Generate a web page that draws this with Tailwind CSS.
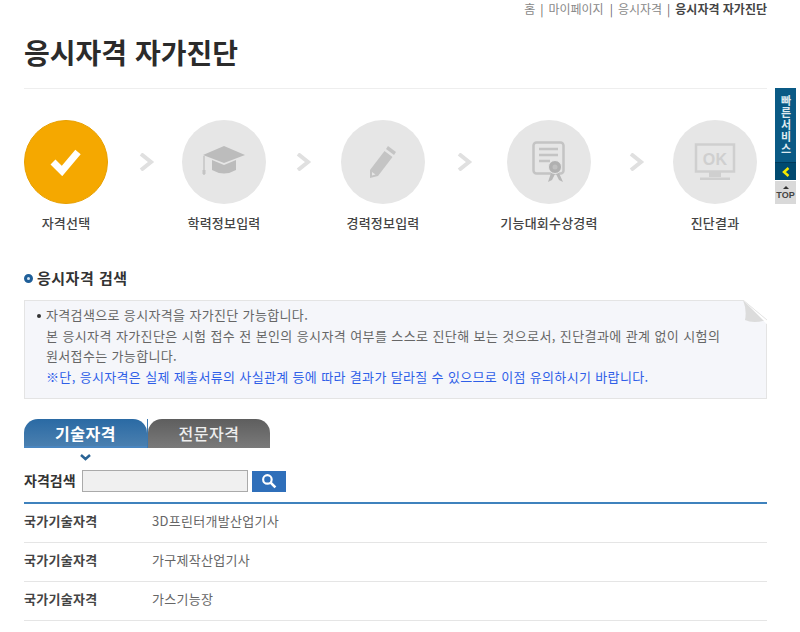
<!DOCTYPE html>
<html lang="ko">
<head>
<meta charset="UTF-8">
<title>응시자격 자가진단</title>
<script src="https://cdn.jsdelivr.net/npm/@tailwindcss/browser@4"></script>
</head>
<body class="bg-white font-['Noto_Sans_CJK_KR','Noto_Sans',sans-serif] text-[#333] overflow-hidden">
<div class="relative w-[800px] h-[632px] overflow-hidden">
  <div class="w-[743px] ml-[24px]">
    <!-- breadcrumb -->
    <div class="flex justify-end items-center h-[17px] text-[12px] leading-[17px] text-[#888] whitespace-nowrap">
      <span>홈</span><span class="mx-[5px] text-[#666]">|</span><span>마이페이지</span><span class="ml-[6px] mr-[5px] text-[#666]">|</span><span>응시자격</span><span class="mx-[5px] text-[#666]">|</span><span class="font-bold text-[#444]">응시자격 자가진단</span>
    </div>
    <!-- title -->
    <div class="h-[72px] border-b border-[#eee] pt-[16px]">
      <h1 class="text-[28px] leading-[38px] font-bold text-[#2b2b2b]">응시자격 자가진단</h1>
    </div>

    <!-- steps -->
    <div class="flex items-start mt-[31px] h-[130px] whitespace-nowrap text-[13px] tracking-[0.2px] font-medium text-[#444]">
      <div class="w-[84px] flex flex-col items-center">
        <div class="w-[84px] h-[84px] rounded-full bg-[#f5a800] border border-[#e8a000] flex items-center justify-center">
          <svg width="32" height="28" viewBox="0 0 32 28"><path d="M3 14 L12 23 L28 4" fill="none" stroke="#fff" stroke-width="7"/></svg>
        </div>
        <span class="mt-[9px] leading-[20px]">자격선택</span>
      </div>
      <div class="w-[74px] h-[84px] pl-[3px] flex items-center justify-center">
        <svg width="16" height="18" viewBox="0 0 16 18"><path d="M2 1 L12 9 L2 17" fill="none" stroke="#e0e0e0" stroke-width="4"/></svg>
      </div>
      <div class="w-[84px] flex flex-col items-center">
        <div class="w-[84px] h-[84px] rounded-full bg-[#e6e6e6] flex items-center justify-center">
          <svg width="44" height="32" viewBox="0 0 44 32"><path d="M22 0 L43 9 L22 17 L1 9 Z" fill="#bcbcbc"/><path d="M10 14 L22 19 L34 14 L34 24 Q22 31 10 24 Z" fill="#bcbcbc"/><path d="M2 10 L2 29" stroke="#c4c4c4" stroke-width="1.500"/><rect x="0.500" y="24" width="3" height="4" fill="#c4c4c4"/></svg>
        </div>
        <span class="mt-[9px] leading-[20px]">학력정보입력</span>
      </div>
      <div class="w-[75px] h-[84px] flex items-center justify-center">
        <svg width="16" height="18" viewBox="0 0 16 18"><path d="M2 1 L12 9 L2 17" fill="none" stroke="#e0e0e0" stroke-width="4"/></svg>
      </div>
      <div class="w-[84px] flex flex-col items-center">
        <div class="w-[84px] h-[84px] rounded-full bg-[#e6e6e6] flex items-center justify-center">
          <svg width="28" height="34" viewBox="0 0 28 34"><path d="M19 1 L27 7 L25 10 L17 4 Z" fill="#c4c4c4"/><path d="M15.500 6 L23.500 12 L9 31 L1 33 L1 25 Z" fill="#c4c4c4"/><path d="M3 27 L3 30.500 L6.500 29.500 Z" fill="#e6e6e6"/></svg>
        </div>
        <span class="mt-[9px] leading-[20px]">경력정보입력</span>
      </div>
      <div class="w-[82px] h-[84px] pr-[3px] flex items-center justify-center">
        <svg width="16" height="18" viewBox="0 0 16 18"><path d="M2 1 L12 9 L2 17" fill="none" stroke="#e0e0e0" stroke-width="4"/></svg>
      </div>
      <div class="w-[84px] flex flex-col items-center">
        <div class="w-[84px] h-[84px] rounded-full bg-[#e6e6e6] flex items-center justify-center">
          <svg width="34" height="42" viewBox="0 0 34 42"><rect x="1.500" y="1.500" width="30" height="31" rx="3" fill="none" stroke="#c4c4c4" stroke-width="2.500"/><path d="M7 8 H26 M7 14 H26 M7 20 H18" stroke="#c4c4c4" stroke-width="2.500"/><path d="M19 32 L16 41 L20 39 L23 33 M27 32 L31 41 L27 39 L24 33" fill="#b8b8b8"/><circle cx="23" cy="26" r="6.500" fill="#b0b0b0" stroke="#e6e6e6" stroke-width="1"/><circle cx="23" cy="26" r="2.500" fill="#c0c0c0"/></svg>
        </div>
        <span class="mt-[9px] leading-[20px]">기능대회수상경력</span>
      </div>
      <div class="w-[82px] h-[84px] pl-[10px] flex items-center justify-center">
        <svg width="16" height="18" viewBox="0 0 16 18"><path d="M2 1 L12 9 L2 17" fill="none" stroke="#e0e0e0" stroke-width="4"/></svg>
      </div>
      <div class="w-[84px] flex flex-col items-center">
        <div class="w-[84px] h-[84px] rounded-full bg-[#e6e6e6] flex items-center justify-center">
          <svg width="42" height="38" viewBox="0 0 42 38"><rect x="2" y="1.500" width="38" height="27" fill="none" stroke="#cfcfcf" stroke-width="2.500"/><text x="21" y="22" text-anchor="middle" font-family="Liberation Sans" font-weight="700" font-size="16" fill="#cfcfcf">OK</text><rect x="15" y="29" width="12" height="5" fill="#cfcfcf"/><rect x="6" y="34.500" width="30" height="2.500" fill="#cfcfcf"/></svg>
        </div>
        <span class="mt-[9px] leading-[20px]">진단결과</span>
      </div>
    </div>

    <!-- section heading -->
    <div class="flex items-center h-[20px] mt-[18px]">
      <span class="w-[9px] h-[9px] rounded-full border-[3px] border-[#1f5f99] bg-[#d5e6f5] mr-[4px]"></span>
      <h2 class="text-[15px] tracking-[0.5px] leading-[20px] font-bold text-[#333]">응시자격 검색</h2>
    </div>

    <!-- notice box -->
    <div class="relative mt-[12px] h-[99px] bg-[#f5f6fa] border border-[#e4e4e4] pl-[21px] pt-[4px] text-[13px] tracking-[0.35px] leading-[20.500px] text-[#666] whitespace-nowrap">
      <span class="absolute left-[12px] top-[13px] w-[4px] h-[4px] rounded-full bg-[#333]"></span>
      <p>자격검색으로 응시자격을 자가진단 가능합니다.</p>
      <p class="tracking-[0.4px]">본 응시자격 자가진단은 시험 접수 전 본인의 응시자격 여부를 스스로 진단해 보는 것으로서, 진단결과에 관계 없이 시험의</p>
      <p>원서접수는 가능합니다.</p>
      <p class="text-[#2f5fe8]">※단, 응시자격은 실제 제출서류의 사실관계 등에 따라 결과가 달라질 수 있으므로 이점 유의하시기 바랍니다.</p>
      <svg class="absolute -right-[1px] -top-[1px]" width="24" height="24" viewBox="0 0 24 24"><path d="M0 0 H24 V24 Z" fill="#fff"/><path d="M0 0 L24 20 Q10 24 2 20 Q4 10 0 0 Z" fill="#dcdcdc"/><path d="M0 0 L24 20 L24 24 Z" fill="#fff"/><path d="M0 0 L24 20" stroke="#e4e4e4"/></svg>
    </div>

    <!-- tabs -->
    <div class="flex mt-[20px] h-[29px] text-[16px] tracking-[0.5px] font-medium">
      <div class="w-[123px] rounded-t-[14px] border-b-2 border-[#4a86c0] bg-[linear-gradient(#2a6aa4,#4a7faf)] text-white text-center leading-[28px] font-bold">기술자격</div>
      <div class="w-[1px] bg-[#3b78b0]"></div>
      <div class="w-[122px] rounded-t-[14px] bg-[linear-gradient(#5e5e5e,#7a7a7a)] text-[#eee] text-center leading-[28px]">전문자격</div>
    </div>
    <div class="h-[13px] pl-[56px] pt-[6px]">
      <svg class="block" width="11" height="7" viewBox="0 0 11 7"><path d="M1 1 L5.500 5 L10 1" fill="none" stroke="#2a6496" stroke-width="2.500"/></svg>
    </div>

    <!-- search -->
    <div class="flex items-center h-[22px] mt-[9px]">
      <span class="text-[14px] leading-[20px] pb-[3px] font-bold text-[#333] w-[58px] whitespace-nowrap">자격검색</span>
      <input type="text" class="w-[166px] h-[22px] bg-[#f0f0f0] border border-[#aaa]">
      <button class="ml-[4px] w-[34px] h-[21px] bg-[#2f6fba] flex items-center justify-center">
        <svg width="16" height="16" viewBox="0 0 15 15"><circle cx="6" cy="6" r="4" fill="none" stroke="#fff" stroke-width="2"/><path d="M9 9 L13.500 13.500" stroke="#fff" stroke-width="2.500"/></svg>
      </button>
    </div>

    <!-- list -->
    <div class="mt-[10px] border-t-2 border-[#3f82bd] text-[13px] tracking-[0.3px]">
      <div class="flex items-center h-[39px] pb-[4px] border-b border-[#e5e5e5]"><span class="w-[128px] font-bold text-[#444]">국가기술자격</span><span class="text-[#666]">3D프린터개발산업기사</span></div>
      <div class="flex items-center h-[39px] pb-[4px] border-b border-[#e5e5e5]"><span class="w-[128px] font-bold text-[#444]">국가기술자격</span><span class="text-[#666]">가구제작산업기사</span></div>
      <div class="flex items-center h-[39px] pb-[4px] border-b border-[#e5e5e5]"><span class="w-[128px] font-bold text-[#444]">국가기술자격</span><span class="text-[#666]">가스기능장</span></div>
    </div>
  </div>

  <!-- quick service side tab -->
  <div class="absolute left-[775px] top-[88px] w-[21px] flex flex-col items-center">
    <div class="w-full h-[74px] bg-[#0a5a85] text-[#dfeaf0] text-[11px] tracking-[1px] font-bold pt-[7px] flex justify-center"><span class="[writing-mode:vertical-rl] [text-orientation:upright] leading-[21px]">빠른서비스</span></div>
    <div class="w-full h-[18px] bg-[#004a70] flex items-center justify-center border-t border-[#003a5a]">
      <svg width="8" height="10" viewBox="0 0 8 10"><path d="M6.500 1 L2 5 L6.500 9" fill="none" stroke="#f5e800" stroke-width="2.500"/></svg>
    </div>
    <div class="w-full h-[23px] mt-[1px] bg-[#d9d9d9] flex flex-col items-center pt-[5px]">
      <span class="block w-0 h-0 border-x-[3px] border-x-transparent border-b-[3px] border-b-[#333]"></span>
      <span class="text-[9px] leading-[12px] font-bold text-[#444] font-['Liberation_Sans',sans-serif]">TOP</span>
    </div>
  </div>
</div>
</body>
</html>
